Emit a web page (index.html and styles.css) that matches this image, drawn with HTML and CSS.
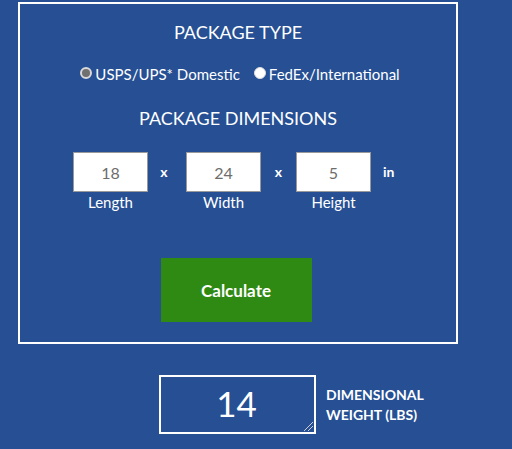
FILE: index.html
```
<!DOCTYPE html>
<html>
<head>
<meta charset="utf-8">
<link rel="stylesheet" href="styles.css">
</head>
<body>
<div class="page">
  <div class="panel">
    <h2 class="title">PACKAGE TYPE</h2>
    <div class="radios">
      <label class="radio"><span class="dot dot-on"></span>USPS/UPS* Domestic</label>
      <label class="radio"><span class="dot"></span>FedEx/International</label>
    </div>
    <h2 class="title title2">PACKAGE DIMENSIONS</h2>
    <div class="dims">
      <div class="field"><div class="box">18</div><div class="lbl">Length</div></div>
      <div class="sep">x</div>
      <div class="field"><div class="box">24</div><div class="lbl">Width</div></div>
      <div class="sep sep2">x</div>
      <div class="field"><div class="box">5</div><div class="lbl">Height</div></div>
      <div class="sep unit">in</div>
    </div>
    <div class="btnrow"><button class="calc">Calculate</button></div>
  </div>
  <div class="result">
    <div class="out">14<span class="grip"></span></div>
    <div class="outlbl">DIMENSIONAL<br>WEIGHT (LBS)</div>
  </div>
</div>
</body>
</html>
```
FILE: styles.css
```
html, body { margin: 0; padding: 0; }
body {
  background: #264f94;
  font-family: Lato, "Open Sans", sans-serif;
  color: #fff;
  width: 512px;
  height: 449px;
  overflow: hidden;
}
.page { padding: 2px 0 0 18px; }
.panel {
  width: 436px;
  height: 338px;
  border: 2px solid #fff;
  box-sizing: content-box;
  display: flex;
  flex-direction: column;
  align-items: center;
}
.title {
  margin: 17px 0 0;
  font-size: 18px;
  font-weight: 400;
  line-height: 22px;
  letter-spacing: 0;
}
.title2 { margin-top: 24px; }
.radios {
  margin-top: 22px;
  display: flex;
  gap: 14px;
  font-size: 15px;
  line-height: 18px;
  margin-left: 4px;
}
.radio { display: flex; align-items: center; gap: 3px; }
.dot {
  width: 12px; height: 12px; border-radius: 50%;
  background: #fff; box-sizing: border-box;
  border: 1px solid #ddd;
  margin-top: -2px;
}
.dot-on { background: #707070; border: 2px solid #d8d8d8; }
.dims {
  margin-top: 23px;
  display: flex;
  align-items: flex-start;
  margin-left: 16px;
}
.field { display: flex; flex-direction: column; align-items: center; }
.box {
  width: 75px; height: 40px; box-sizing: border-box;
  background: #fff; border: 1px solid #999;
  color: #6d6d6d; font-size: 16px;
  display: flex; align-items: center; justify-content: center;
}
.lbl { font-size: 15px; line-height: 18px; margin-top: 1px; }
.sep {
  width: 38px; text-align: center;
  font-size: 14px; line-height: 40px; font-weight: 700;
  padding-right: 6px; box-sizing: border-box;
}
.sep2 { width: 35px; padding-right: 0; }
.unit { width: 48px; padding: 0 0 0 12px; text-align: left; }
.btnrow { margin-top: 47px; margin-right: 4px; }
.calc {
  width: 151px; height: 64px;
  background: #2e8a12; border: none; color: #fff;
  font-family: Lato, "Open Sans", sans-serif;
  font-weight: 700; font-size: 17px;
}
.result {
  display: flex; align-items: center;
  margin: 31px 0 0 141px;
  gap: 10px;
}
.out {
  position: relative;
  width: 157px; height: 59px; box-sizing: border-box;
  border: 2px solid #fff;
  font-size: 35px; line-height: 52px;
  text-align: center; padding-right: 2px;
}
.grip {
  position: absolute; right: 1px; bottom: 1px;
  width: 9px; height: 9px;
  background: linear-gradient(135deg, transparent 45%, #ccc 45%, #ccc 52%, transparent 52%, transparent 70%, #ccc 70%, #ccc 77%, transparent 77%);
}
.outlbl {
  font-size: 14px; font-weight: 700; line-height: 20px;
  margin-top: 1px;
}
```
